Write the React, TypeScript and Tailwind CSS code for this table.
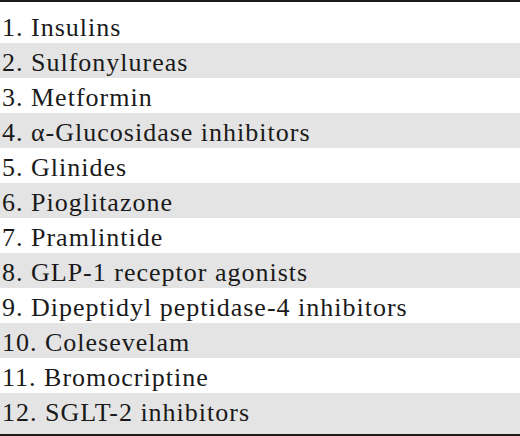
const DRUGS = [
  "Insulins",
  "Sulfonylureas",
  "Metformin",
  "α-Glucosidase inhibitors",
  "Glinides",
  "Pioglitazone",
  "Pramlintide",
  "GLP-1 receptor agonists",
  "Dipeptidyl peptidase-4 inhibitors",
  "Colesevelam",
  "Bromocriptine",
  "SGLT-2 inhibitors",
];

export default function App() {
  return (
    <div className="h-[436px] w-[520px] bg-white font-[family-name:Liberation_Serif,serif] text-[#1a1a1a]">
      <div className="flex flex-col border-y-2 border-[#1c1c1c]">
        {DRUGS.map((d, i) => (
          <div
            key={d}
            className={`flex h-[35px] items-center pl-[2px] pt-[3px] text-[26px] tracking-[1px] ${
              i % 2 === 1 ? "bg-[#e4e4e4]" : "bg-white"
            } ${i === 0 ? "h-[41px] pt-[9px]" : ""} ${
              i === DRUGS.length - 1 ? "h-[41px] pb-[6px]" : ""
            }`}
          >
            {i + 1}. {d}
          </div>
        ))}
      </div>
    </div>
  );
}
